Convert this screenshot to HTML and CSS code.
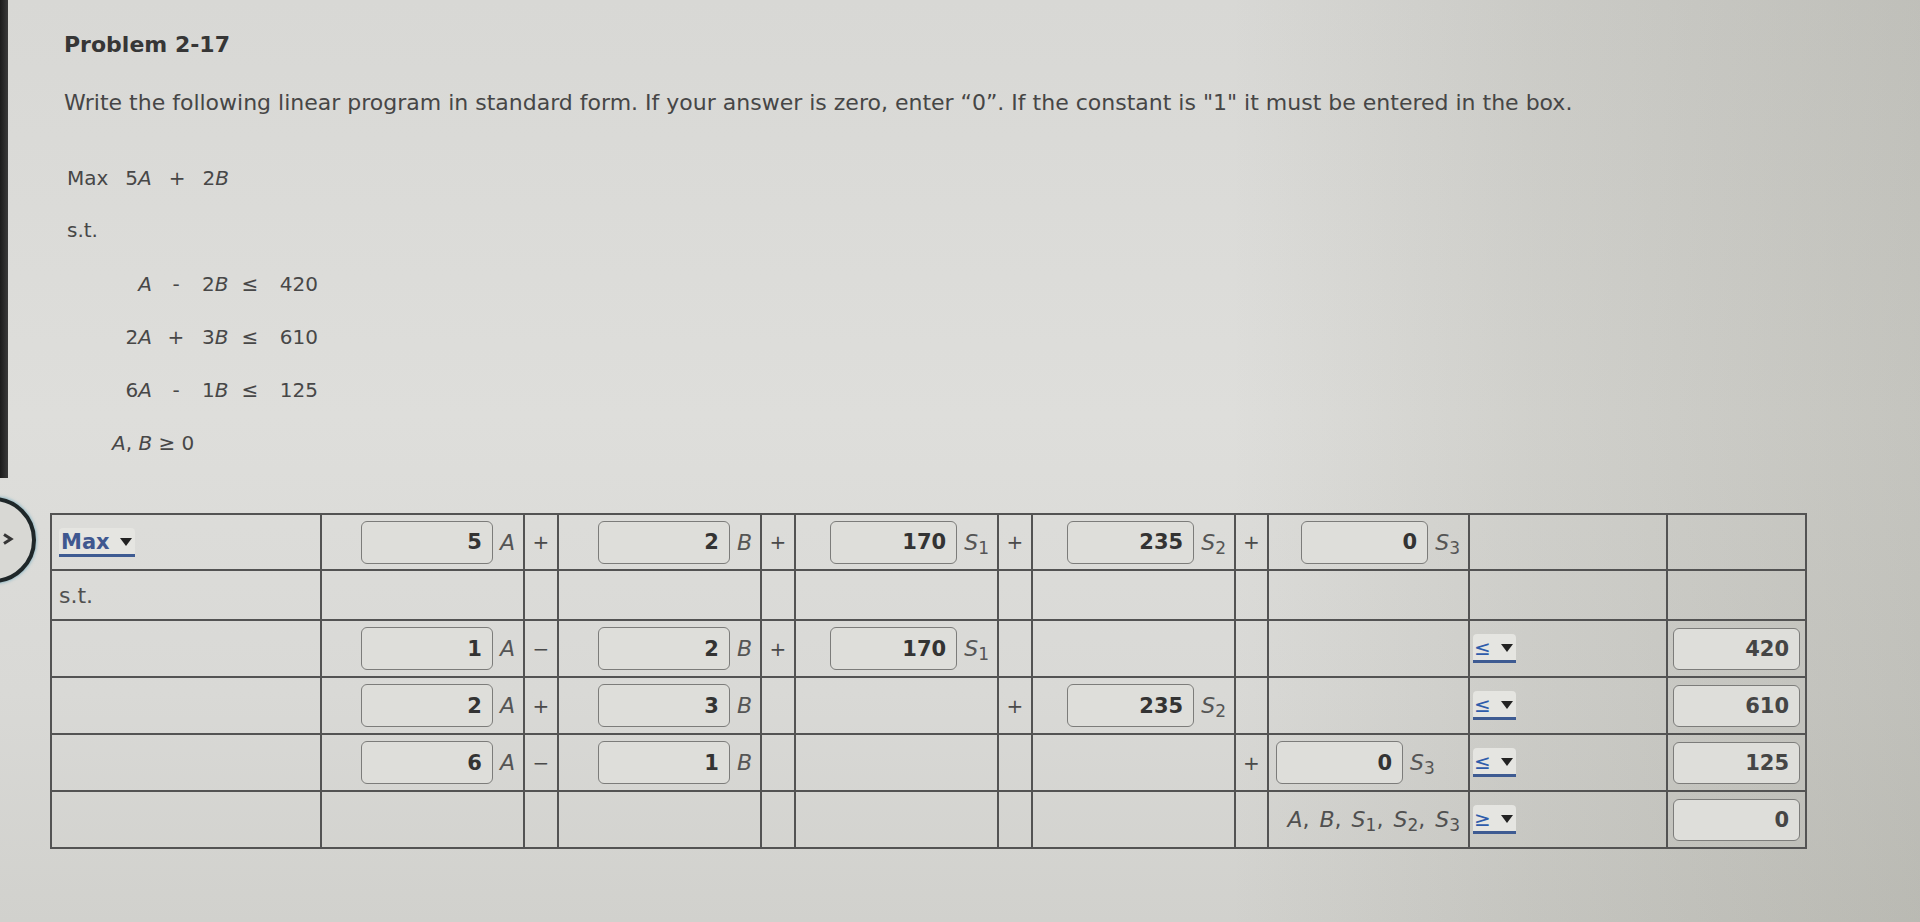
FILE: index.html
```html
<!DOCTYPE html>
<html lang="en">
<head>
<meta charset="utf-8">
<title>Problem 2-17</title>
<link rel="stylesheet" href="styles.css">
</head>
<body>
<div class="edge"></div>
<div class="navbtn"></div>
<svg class="chev" width="11" height="12" viewBox="0 0 11 12"><path d="M1 1.5 L8 6 L1 10.5" fill="none" stroke="#353535" stroke-width="3"/></svg>

<main class="page">
  <h1 class="title">Problem 2-17</h1>
  <p class="instr">Write the following linear program in standard form. If your answer is zero, enter “0”. If the constant is "1" it must be entered in the box.</p>

  <div class="obj"><span>Max</span><span>5<i>A</i></span><span class="op">+</span><span>2<i>B</i></span></div>
  <div class="st">s.t.</div>

  <div class="cons">
    <span class="c1"><i>A</i></span><span class="c2">-</span><span class="c3">2<i>B</i></span><span class="c4">≤</span><span class="c5">420</span>
    <span class="c1">2<i>A</i></span><span class="c2">+</span><span class="c3">3<i>B</i></span><span class="c4">≤</span><span class="c5">610</span>
    <span class="c1">6<i>A</i></span><span class="c2">-</span><span class="c3">1<i>B</i></span><span class="c4">≤</span><span class="c5">125</span>
    <span class="nonneg"><i>A</i>, <i>B</i> ≥ 0</span>
  </div>

  <div class="tablewrap">
    <table class="lp">
      <colgroup>
        <col class="w-lbl"><col class="w-term"><col class="w-op"><col class="w-term"><col class="w-op"><col class="w-term"><col class="w-op"><col class="w-term"><col class="w-op2"><col class="w-term3"><col class="w-rel"><col class="w-rhs">
      </colgroup>
      <tr class="r1">
        <td class="lbl"><span class="dd dd-max">Max<svg class="tri" width="12" height="8" viewBox="0 0 12 8"><path d="M0 0H12L6 8Z"/></svg></span></td>
        <td><div class="term"><input class="num" type="text" value="5" readonly><span class="var"><i>A</i></span></div></td>
        <td class="op">+</td>
        <td><div class="term"><input class="num" type="text" value="2" readonly><span class="var"><i>B</i></span></div></td>
        <td class="op">+</td>
        <td><div class="term"><input class="num s" type="text" value="170" readonly><span class="var"><i>S</i><sub>1</sub></span></div></td>
        <td class="op">+</td>
        <td><div class="term"><input class="num s" type="text" value="235" readonly><span class="var"><i>S</i><sub>2</sub></span></div></td>
        <td class="op">+</td>
        <td><div class="term"><input class="num s" type="text" value="0" readonly><span class="var"><i>S</i><sub>3</sub></span></div></td>
        <td></td>
        <td></td>
      </tr>
      <tr class="r2">
        <td class="lbl st2">s.t.</td>
        <td></td><td></td><td></td><td></td><td></td><td></td><td></td><td></td><td></td><td></td><td></td>
      </tr>
      <tr class="rc">
        <td></td>
        <td><div class="term"><input class="num" type="text" value="1" readonly><span class="var"><i>A</i></span></div></td>
        <td class="op">−</td>
        <td><div class="term"><input class="num" type="text" value="2" readonly><span class="var"><i>B</i></span></div></td>
        <td class="op">+</td>
        <td><div class="term"><input class="num s" type="text" value="170" readonly><span class="var"><i>S</i><sub>1</sub></span></div></td>
        <td></td>
        <td></td>
        <td></td>
        <td></td>
        <td class="rel"><span class="dd dd-rel">≤<svg class="tri" width="12" height="8" viewBox="0 0 12 8"><path d="M0 0H12L6 8Z"/></svg></span></td>
        <td class="rhs"><input class="num rhsin" type="text" value="420" readonly></td>
      </tr>
      <tr class="rc">
        <td></td>
        <td><div class="term"><input class="num" type="text" value="2" readonly><span class="var"><i>A</i></span></div></td>
        <td class="op">+</td>
        <td><div class="term"><input class="num" type="text" value="3" readonly><span class="var"><i>B</i></span></div></td>
        <td></td>
        <td></td>
        <td class="op">+</td>
        <td><div class="term"><input class="num s" type="text" value="235" readonly><span class="var"><i>S</i><sub>2</sub></span></div></td>
        <td></td>
        <td></td>
        <td class="rel"><span class="dd dd-rel">≤<svg class="tri" width="12" height="8" viewBox="0 0 12 8"><path d="M0 0H12L6 8Z"/></svg></span></td>
        <td class="rhs"><input class="num rhsin" type="text" value="610" readonly></td>
      </tr>
      <tr class="rc">
        <td></td>
        <td><div class="term"><input class="num" type="text" value="6" readonly><span class="var"><i>A</i></span></div></td>
        <td class="op">−</td>
        <td><div class="term"><input class="num" type="text" value="1" readonly><span class="var"><i>B</i></span></div></td>
        <td></td>
        <td></td>
        <td></td>
        <td></td>
        <td class="op">+</td>
        <td><div class="term left"><input class="num s" type="text" value="0" readonly><span class="var"><i>S</i><sub>3</sub></span></div></td>
        <td class="rel"><span class="dd dd-rel">≤<svg class="tri" width="12" height="8" viewBox="0 0 12 8"><path d="M0 0H12L6 8Z"/></svg></span></td>
        <td class="rhs"><input class="num rhsin" type="text" value="125" readonly></td>
      </tr>
      <tr class="rc">
        <td></td>
        <td></td><td></td><td></td><td></td><td></td><td></td><td></td><td></td>
        <td class="vars"><i>A</i>, <i>B</i>, <i>S</i><sub>1</sub>, <i>S</i><sub>2</sub>, <i>S</i><sub>3</sub></td>
        <td class="rel"><span class="dd dd-rel">≥<svg class="tri" width="12" height="8" viewBox="0 0 12 8"><path d="M0 0H12L6 8Z"/></svg></span></td>
        <td class="rhs"><input class="num rhsin" type="text" value="0" readonly></td>
      </tr>
    </table>
  </div>
</main>
</body>
</html>
```

FILE: styles.css
```css
html, body {
  margin: 0;
  padding: 0;
}

body {
  width: 1920px;
  height: 922px;
  overflow: hidden;
  position: relative;
  font-family: "DejaVu Sans", Verdana, sans-serif;
  color: #404040;
  background:
    linear-gradient(to right, rgba(70, 70, 50, 0) 0%, rgba(70, 70, 50, 0) 64%, rgba(70, 70, 50, 0.09) 80%, rgba(70, 70, 50, 0.17) 100%),
    linear-gradient(to bottom, #d8d8d5 0%, #dededb 45%, #d9d9d6 75%, #d1d1cd 100%);
}

.edge {
  position: absolute;
  left: 0;
  top: 0;
  width: 8px;
  height: 478px;
  background: linear-gradient(to right, #1b1b1b, #3a3a3a);
}

.navbtn {
  position: absolute;
  left: -50px;
  top: 497px;
  width: 78px;
  height: 78px;
  border: 4px solid #1f2729;
  border-radius: 50%;
  background: #d8d8d4;
  box-shadow: 0 0 3px 1px rgba(90, 160, 185, 0.55);
}

.chev {
  position: absolute;
  left: 3px;
  top: 533px;
}

.page {
  padding: 32px 0 0 64px;
}

.title {
  margin: 0;
  font-size: 22px;
  line-height: 26px;
  font-weight: bold;
  color: #363636;
}

.instr {
  margin: 33px 0 0;
  font-size: 22px;
  line-height: 24px;
  color: #464646;
}

.obj {
  margin-top: 51px;
  padding-left: 3px;
  display: flex;
  align-items: center;
  font-size: 20px;
  line-height: 24px;
  color: #474747;
}

.obj > span + span {
  margin-left: 17px;
}

.st {
  margin-top: 28px;
  padding-left: 3px;
  font-size: 20px;
  line-height: 24px;
  color: #474747;
}

.cons {
  margin: 30px 0 0 48px;
  display: grid;
  grid-template-columns: 40px 48px 36px 28px 54px;
  row-gap: 29px;
  width: 206px;
  font-size: 20px;
  line-height: 24px;
  color: #474747;
}

.cons .c1 { text-align: right; }
.cons .c2 { text-align: center; }
.cons .c3 { text-align: left; padding-left: 2px; }
.cons .c4 { text-align: center; }
.cons .c5 { text-align: right; }
.cons .nonneg { grid-column: 1 / -1; }

.tablewrap {
  margin: 58px 0 0 -14px;
}

.lp {
  border-collapse: collapse;
  table-layout: fixed;
  width: 1753px;
  font-size: 22px;
  color: #444;
}

.w-lbl { width: 270px; }
.w-term { width: 203px; }
.w-op { width: 34px; }
.w-op2 { width: 33px; }
.w-term3 { width: 201px; }
.w-rel { width: 198px; }
.w-rhs { width: 139px; }

.lp td {
  border: 2px solid #535353;
  padding: 0 8px 0 7px;
  vertical-align: middle;
}

.r1 td { height: 54px; }
.r2 td { height: 48px; }
.rc td { height: 55px; }

.lp td.op {
  padding: 0;
  text-align: center;
  color: #4a4a4a;
  font-size: 20px;
}

.lbl { color: #505050; }
.st2 { padding-top: 4px; }

.term {
  display: flex;
  justify-content: flex-end;
  align-items: center;
  gap: 7px;
}

.term.left {
  justify-content: flex-start;
}

.num {
  box-sizing: border-box;
  width: 132px;
  height: 43px;
  margin: 0;
  padding: 0 10px 0 4px;
  border: 1.5px solid #7c7c7a;
  border-radius: 6px;
  background: #dededa;
  font-family: "DejaVu Sans", Verdana, sans-serif;
  font-size: 21px;
  font-weight: bold;
  color: #333;
  text-align: right;
  outline: none;
}

.num.s { width: 127px; }

.var {
  color: #555;
  font-size: 22px;
  white-space: nowrap;
}

.var i, .vars i { font-style: italic; }

sub {
  font-size: 17px;
  vertical-align: -4px;
  line-height: 0;
}

.vars {
  text-align: right;
  color: #505050;
  white-space: nowrap;
  padding-right: 10px;
  word-spacing: 3px;
}

.lp td.rel { padding-left: 3px; }

.dd {
  display: inline-flex;
  align-items: center;
  padding: 3px 3px 1px 2px;
  border-radius: 4px 4px 0 0;
  background: #e5e5e1;
  border-bottom: 3px solid #3e5b92;
  line-height: 22px;
}

.dd .tri path { fill: #222; }

.dd-max {
  font-size: 21px;
  font-weight: bold;
  color: #3f5890;
  gap: 10px;
}

.dd-rel {
  font-size: 20px;
  color: #2e5cab;
  gap: 10px;
  padding-left: 1px;
}

.lp td.rhs {
  padding: 0 6px 0 5px;
}

.rhsin {
  width: 127px;
  height: 42px;
  color: #454545;
}
```
